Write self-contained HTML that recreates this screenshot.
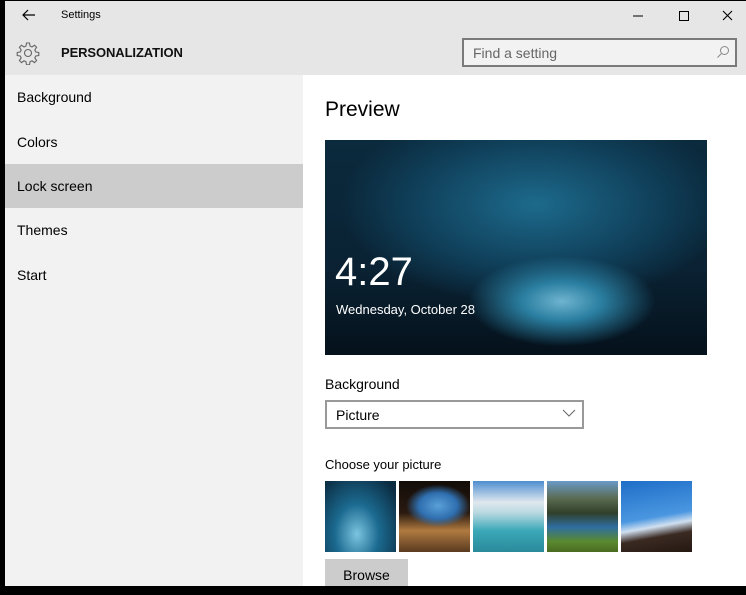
<!DOCTYPE html>
<html><head><meta charset="utf-8"><style>
*{margin:0;padding:0;box-sizing:border-box}
body{width:746px;height:595px;background:#000;position:relative;overflow:hidden;font-family:"Liberation Sans",sans-serif;color:#000}
.abs{position:absolute}
#hdr{left:5px;top:1px;width:741px;height:74px;background:#e6e6e6}
#side{left:5px;top:75px;width:298px;height:511px;background:#f2f2f2}
#main{left:303px;top:75px;width:443px;height:511px;background:#fff}
.nav{position:absolute;left:5px;width:298px;height:44px;font-size:14px;padding-left:12px;line-height:44px}
.sel{background:#ccc}
.th{position:absolute;top:481px;width:71px;height:71px}
</style></head><body>
<div id="hdr" class="abs"></div>
<div id="side" class="abs"></div>
<div id="main" class="abs"></div>
<svg class="abs" style="left:22px;top:9px" width="14" height="12"><path d="M1 6H13M6 1L1 6L6 11" stroke="#000" stroke-width="1.2" fill="none"/></svg>
<div class="abs" style="left:61px;top:9px;font-size:11px">Settings</div>
<svg class="abs" style="left:633px;top:9px" width="100" height="14"><path d="M0 7H10" stroke="#000"/><rect x="46.5" y="2.5" width="9" height="9" fill="none" stroke="#000"/><path d="M90 2L99 11M99 2L90 11" stroke="#000" stroke-width="1.1"/></svg>
<svg class="abs" style="left:16px;top:41px" width="24" height="24" viewBox="0 0 24 24"><g fill="none" stroke="#666" stroke-width="1.1"><circle cx="12" cy="12" r="3.5"/><path d="M10.5 2h3l.5 3 2 1 2.5-1.8 2.1 2.1L18.8 9l1 2 3 .5v3l-3 .5-1 2 1.8 2.5-2.1 2.1L16 19.8l-2 1-.5 3h-3l-.5-3-2-1-2.5 1.8-2.1-2.1L5.2 17l-1-2-3-.5v-3l3-.5 1-2L3.4 6.3l2.1-2.1L8 6l2-1z"/></g></svg>
<div class="abs" style="left:61px;top:45px;font-size:13px;font-weight:bold;letter-spacing:-.1px;color:#111">PERSONALIZATION</div>
<div class="abs" style="left:462px;top:38px;width:275px;height:29px;border:2px solid #7a7a7a;background:#f2f2f2;font-size:14px;color:#666;padding:5px 0 0 9px">Find a setting</div>
<svg class="abs" style="left:716px;top:45px" width="14" height="14"><circle cx="8.5" cy="5.5" r="4" fill="none" stroke="#888"/><path d="M5.5 8.5L1.5 12.5" stroke="#888"/></svg>
<div class="nav" style="top:75px">Background</div>
<div class="nav" style="top:120px">Colors</div>
<div class="nav sel" style="top:164px">Lock screen</div>
<div class="nav" style="top:208px">Themes</div>
<div class="nav" style="top:253px">Start</div>
<div class="abs" style="left:325px;top:98px;font-size:21px;color:#000">Preview</div>
<div class="abs" style="left:325px;top:140px;width:382px;height:215px;background:radial-gradient(ellipse 35% 30% at 62% 75%,#6fb4d0 0%,#2a7ea0 30%,transparent 70%),radial-gradient(ellipse 60% 55% at 55% 30%,#1d6a8c 0%,#0f3e58 55%,transparent 85%),linear-gradient(180deg,#0b2a3d 0%,#0a2233 60%,#05111b 100%)"></div>
<div class="abs" style="left:335px;top:250px;font-size:40px;color:#fff;font-weight:300">4:27</div>
<div class="abs" style="left:336px;top:302px;font-size:13px;color:#fff">Wednesday, October 28</div>
<div class="abs" style="left:325px;top:376px;font-size:14px">Background</div>
<div class="abs" style="left:325px;top:400px;width:259px;height:29px;border:2px solid #999;font-size:14px;padding:5px 0 0 9px">Picture</div>
<svg class="abs" style="left:562px;top:409px" width="14" height="9"><path d="M1 1L7 7L13 1" stroke="#666" fill="none"/></svg>
<div class="abs" style="left:325px;top:457px;font-size:13px">Choose your picture</div>
<div class="th" style="left:325px;background:radial-gradient(ellipse at 45% 75%,#7cc4e0,#1b6a90 40%,#0b2b40 90%)"></div>
<div class="th" style="left:399px;background:radial-gradient(ellipse 45% 30% at 55% 35%,#5aa0d8,#2f6fb0 60%,transparent 100%),linear-gradient(180deg,#120c08 0%,#2a1a10 45%,#b07a40 70%,#5a3a20 100%)"></div>
<div class="th" style="left:473px;background:linear-gradient(180deg,#4e8ed0 0%,#dfe8ee 30%,#b8d8e0 45%,#3aa8b8 70%,#2a8a9a 100%)"></div>
<div class="th" style="left:547px;background:linear-gradient(180deg,#6a9ac8 0%,#5a6a50 25%,#30402a 45%,#2f6ea0 65%,#5a8a30 85%,#4a6a20 100%)"></div>
<div class="th" style="left:621px;background:linear-gradient(170deg,#1e6ec8 0%,#4a96e0 50%,#d0e0f0 62%,#3a2a22 75%,#251812 100%)"></div>
<div class="abs" style="left:325px;top:559px;width:83px;height:27px;background:#ccc;font-size:14px;text-align:center;padding-top:8px">Browse</div>
</body></html>
